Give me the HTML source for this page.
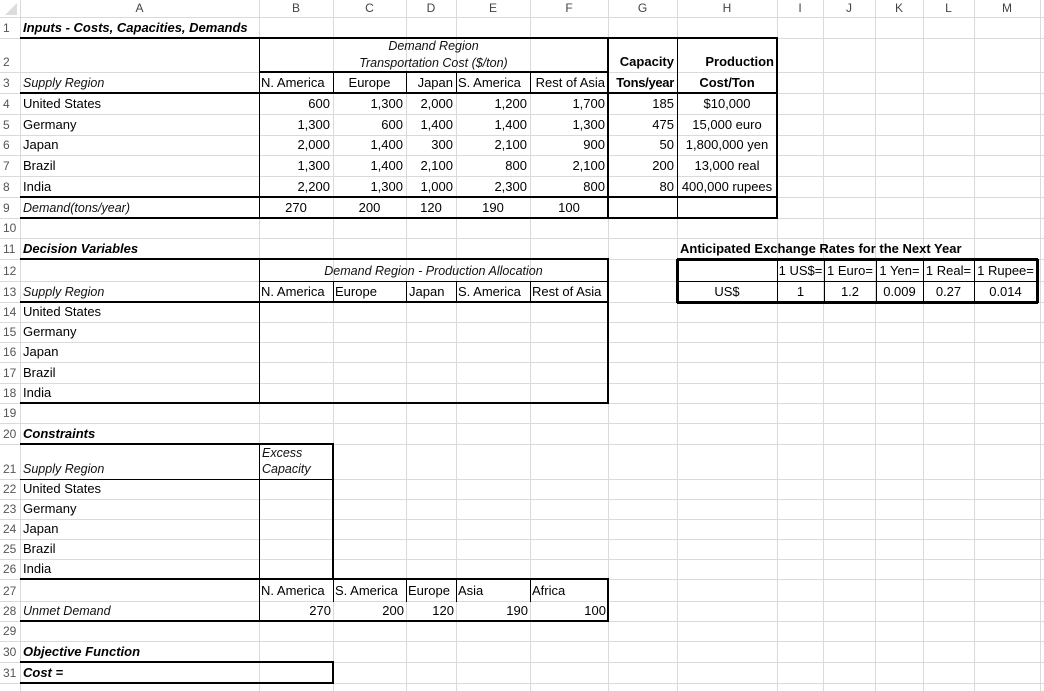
<!DOCTYPE html>
<html><head><meta charset="utf-8"><style>
html,body{margin:0;padding:0;background:#fff;width:1044px;height:691px;overflow:hidden;position:relative;font-family:"Liberation Sans",Arial,sans-serif;color:#000}
.g{position:absolute;background:#dadada}
.k{position:absolute;background:#000}
.c{position:absolute;display:flex;align-items:flex-end;box-sizing:border-box;padding:0 3px 3px;white-space:nowrap;font-size:13px;line-height:14px}
.r{justify-content:flex-end}.m{justify-content:center}
.i{font-style:italic;font-size:12.5px;color:#111}
.b{font-weight:bold}
.bi{font-weight:bold;font-style:italic;font-size:13px}
.rh{position:absolute;left:0;width:20px;font-size:12px;color:#555;text-align:left;padding-left:3px;box-sizing:border-box;display:flex;align-items:flex-end;padding-bottom:3px}
.ch{position:absolute;top:0;height:17px;font-size:12px;color:#444;text-align:center;line-height:17px}
</style></head><body>
<div style="position:absolute;left:0;top:0;width:20px;height:17px;background:#fff"></div>
<svg style="position:absolute;left:4px;top:3px" width="13" height="12"><polygon points="13,0 13,12 1,12" fill="#dcdcdc"/></svg>
<div id="grid"></div>
<script>
var X=[20,259,333,406,456,530,608,677,777,823,875,923,974,1040];
var Y=[17,38,72,93,114,135,155,176,197,218,238,259,281,302,322,342,362,383,403,423,444,479,499,519,539,559,579,601,621,641,662,683];
var h='';
X.forEach(function(x){h+='<div class="g" style="left:'+x+'px;top:0;width:1px;height:691px"></div>';});
Y.forEach(function(y){h+='<div class="g" style="left:0;top:'+y+'px;width:1044px;height:1px"></div>';});
var L='ABCDEFGHIJKLM';
for(var i=0;i<13;i++){h+='<div class="ch" style="left:'+X[i]+'px;width:'+(X[i+1]-X[i])+'px">'+L[i]+'</div>';}
for(var r=0;r<31;r++){var t=Y[r],b=(r+1<Y.length?Y[r+1]:703);h+='<div class="rh" style="top:'+t+'px;height:'+(b-t)+'px">'+(r+1)+'</div>';}
function HL(x1,x2,y,w){h+='<div class="k" style="left:'+x1+'px;top:'+(y-(w>1?1:0))+'px;width:'+(x2-x1+1)+'px;height:'+w+'px"></div>';}
function VL(x,y1,y2,w){h+='<div class="k" style="left:'+(x-(w>1?1:0))+'px;top:'+y1+'px;width:'+w+'px;height:'+(y2-y1+1)+'px"></div>';}
HL(20,777,38,2);HL(20,777,93,2);HL(20,777,197,2);HL(20,777,218,2);HL(259,608,72,2);
VL(259,38,218,1);[333,406,456,530].forEach(function(x){VL(x,72,93,1);});
VL(608,38,218,2);VL(677,38,218,1);VL(777,38,218,2);
HL(20,608,259,2);HL(20,608,302,2);HL(20,608,403,2);HL(259,608,281,1);
VL(259,259,403,1);[333,406,456,530].forEach(function(x){VL(x,281,302,1);});VL(608,259,403,2);
HL(20,333,444,2);HL(20,333,479,1);VL(259,444,579,1);VL(333,444,579,2);
HL(20,608,579,2);HL(20,608,621,2);VL(259,579,621,1);[333,406,456,530].forEach(function(x){VL(x,579,601,1);});VL(608,579,621,2);
HL(20,333,662,2);HL(20,333,683,2);VL(333,662,683,2);
HL(677,1037,259,3);HL(677,1037,302,3);VL(677,259,302,3);VL(1037,259,302,3);HL(677,1037,281,1);
[777,824,876,923,974].forEach(function(x){VL(x,259,302,1);});
document.getElementById('grid').innerHTML=h;
</script>

<div class="c bi" style="left:20px;top:17px;width:300px;height:21px">Inputs - Costs, Capacities, Demands</div>
<div class="c m i" style="left:259px;top:36px;width:349px;height:17px;padding:0">Demand Region</div>
<div class="c m i" style="left:259px;top:53px;width:349px;height:17px;padding:0">Transportation Cost ($/ton)</div>
<div class="c r b" style="left:608px;top:38px;width:69px;height:34px">Capacity</div>
<div class="c r b" style="left:677px;top:38px;width:100px;height:34px">Production</div>

<div class="c i" style="left:20px;top:72px;width:239px;height:21px">Supply Region</div>
<div class="c" style="left:259px;top:72px;width:74px;height:21px;padding-left:2px">N. America</div>
<div class="c m" style="left:333px;top:72px;width:73px;height:21px">Europe</div>
<div class="c r" style="left:406px;top:72px;width:50px;height:21px">Japan</div>
<div class="c" style="left:456px;top:72px;width:74px;height:21px;padding-left:2px">S. America</div>
<div class="c r" style="left:530px;top:72px;width:78px;height:21px">Rest of Asia</div>
<div class="c r b" style="left:608px;top:72px;width:69px;height:21px;letter-spacing:-0.3px">Tons/year</div>
<div class="c m b" style="left:677px;top:72px;width:100px;height:21px">Cost/Ton</div>

<div id="d1"></div>
<script>
var rows=[["United States","600","1,300","2,000","1,200","1,700","185","$10,000"],
["Germany","1,300","600","1,400","1,400","1,300","475","15,000 euro"],
["Japan","2,000","1,400","300","2,100","900","50","1,800,000 yen"],
["Brazil","1,300","1,400","2,100","800","2,100","200","13,000 real"],
["India","2,200","1,300","1,000","2,300","800","80","400,000 rupees"]];
var Y=[93,114,135,155,176,197];var X=[20,259,333,406,456,530,608,677,777];var s='';
rows.forEach(function(r,i){var t=Y[i],hh=Y[i+1]-t;
r.forEach(function(v,j){var cl=j==0?'c':(j==7?'c m':'c r');s+='<div class="'+cl+'" style="left:'+X[j]+'px;top:'+t+'px;width:'+(X[j+1]-X[j])+'px;height:'+hh+'px">'+v+'</div>';});});
var d9=["270","200","120","190","100"];
s+='<div class="c i" style="left:20px;top:197px;width:239px;height:21px">Demand(tons/year)</div>';
d9.forEach(function(v,j){s+='<div class="c m" style="left:'+X[j+1]+'px;top:197px;width:'+(X[j+2]-X[j+1])+'px;height:21px">'+v+'</div>';});
var names=["United States","Germany","Japan","Brazil","India"];
var Y2=[302,322,342,362,383,403],Y3=[479,499,519,539,559,579];
names.forEach(function(n,i){s+='<div class="c" style="left:20px;top:'+Y2[i]+'px;width:239px;height:'+(Y2[i+1]-Y2[i])+'px">'+n+'</div>';
s+='<div class="c" style="left:20px;top:'+Y3[i]+'px;width:239px;height:'+(Y3[i+1]-Y3[i])+'px">'+n+'</div>';});
var h27=["N. America","S. America","Europe","Asia","Africa"],v28=["270","200","120","190","100"];
h27.forEach(function(v,j){s+='<div class="c" style="left:'+X[j+1]+'px;top:579px;width:'+(X[j+2]-X[j+1])+'px;height:22px;padding-left:2px">'+v+'</div>';
s+='<div class="c r" style="left:'+X[j+1]+'px;top:601px;width:'+(X[j+2]-X[j+1])+'px;height:20px;padding-right:2px">'+v28[j]+'</div>';});
var EX=[677,777,824,876,923,974,1037];var e1=["","1 US$=","1 Euro=","1 Yen=","1 Real=","1 Rupee="],e2=["US$","1","1.2","0.009","0.27","0.014"];
for(var j=0;j<6;j++){s+='<div class="c m" style="left:'+EX[j]+'px;top:259px;width:'+(EX[j+1]-EX[j])+'px;height:22px;padding:0 0 3px">'+e1[j]+'</div>';
s+='<div class="c m" style="left:'+EX[j]+'px;top:281px;width:'+(EX[j+1]-EX[j])+'px;height:21px;padding:0 0 3px">'+e2[j]+'</div>';}
document.getElementById('d1').innerHTML=s;
</script>

<div class="c bi" style="left:20px;top:238px;width:239px;height:21px">Decision Variables</div>
<div class="c b" style="left:677px;top:238px;width:340px;height:21px">Anticipated Exchange Rates for the Next Year</div>
<div class="c m i" style="left:259px;top:259px;width:349px;height:22px">Demand Region - Production Allocation</div>
<div class="c i" style="left:20px;top:281px;width:239px;height:21px">Supply Region</div>
<div class="c" style="left:259px;top:281px;width:74px;height:21px;padding-left:2px">N. America</div>
<div class="c" style="left:333px;top:281px;width:73px;height:21px;padding-left:2px">Europe</div>
<div class="c" style="left:406px;top:281px;width:50px;height:21px">Japan</div>
<div class="c" style="left:456px;top:281px;width:74px;height:21px;padding-left:2px">S. America</div>
<div class="c" style="left:530px;top:281px;width:78px;height:21px;padding-left:2px">Rest of Asia</div>

<div class="c bi" style="left:20px;top:423px;width:239px;height:21px">Constraints</div>
<div class="c i" style="left:259px;top:444px;width:74px;height:17px;padding-bottom:1px">Excess</div>
<div class="c i" style="left:259px;top:461px;width:74px;height:18px">Capacity</div>
<div class="c i" style="left:20px;top:444px;width:239px;height:35px">Supply Region</div>
<div class="c i" style="left:20px;top:601px;width:239px;height:20px">Unmet Demand</div>
<div class="c bi" style="left:20px;top:641px;width:239px;height:21px">Objective Function</div>
<div class="c bi" style="left:20px;top:662px;width:239px;height:21px">Cost =</div>
</body></html>
